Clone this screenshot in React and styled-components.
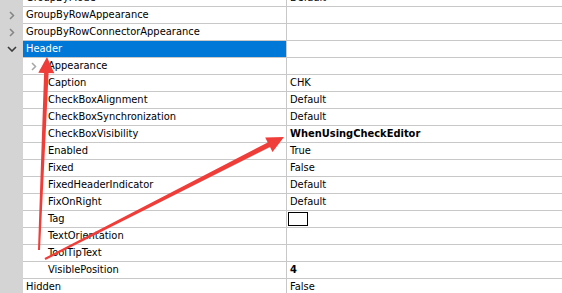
import React from "react";
import styled, { createGlobalStyle } from "styled-components";

const GlobalStyle = createGlobalStyle`
  html, body { margin: 0; padding: 0; background: #fff; }
  body {
    font-family: "DejaVu Sans Condensed", Tahoma, "Liberation Sans", sans-serif;
    font-size: 11px;
    color: #000;
    overflow: hidden;
  }
`;

const Grid = styled.div`
  position: relative;
  width: 562px;
  height: 293px;
  overflow: hidden;
  background: #fff;
`;

const List = styled.div`
  display: flex;
  flex-direction: column;
  margin-top: -10px;
`;

const Row = styled.div`
  display: grid;
  grid-template-columns: 23px 264px 1fr;
  height: 17px;
`;

const Gutter = styled.div`
  background: #d4d4d4;
  display: flex;
  align-items: center;
  justify-content: center;
  padding-bottom: 1px;
  box-sizing: border-box;
`;

const NameCell = styled.div`
  box-sizing: border-box;
  display: flex;
  align-items: center;
  border-bottom: 1px solid #c8c8c8;
  border-right: 1px solid #c8c8c8;
  background: ${(p) => (p.$selected ? "#0078d7" : "#fff")};
  color: ${(p) => (p.$selected ? "#fff" : "#000")};
  white-space: nowrap;
  overflow: hidden;
`;

const Indent = styled.span`
  width: 22px;
  flex: none;
  display: flex;
  align-items: center;
  justify-content: center;
  padding-left: 0px;
`;

const Label = styled.span`
  padding-left: 3px;
  line-height: 16px;
`;

const ValueCell = styled.div`
  box-sizing: border-box;
  display: flex;
  align-items: center;
  border-bottom: 1px solid #c8c8c8;
  padding-left: 3px;
  font-weight: ${(p) => (p.$bold ? "bold" : "normal")};
  white-space: nowrap;
  line-height: 16px;
`;

const ColorBox = styled.span`
  display: block;
  width: 20px;
  height: 14px;
  box-sizing: border-box;
  border: 1px solid #000;
  background: #fff;
  margin-left: -2px;
`;

const Overlay = styled.svg`
  position: absolute;
  left: 0;
  top: 0;
  pointer-events: none;
`;

const Chevron = ({ dir, color }) =>
  dir === "down" ? (
    <svg width="10" height="6" viewBox="0 0 10 6">
      <polyline points="1,1 5,5 9,1" fill="none" stroke={color} strokeWidth="1.6" />
    </svg>
  ) : (
    <svg width="6" height="9" viewBox="0 0 6 9">
      <polyline points="1,1 4.5,4.5 1,8" fill="none" stroke={color} strokeWidth="1.5" />
    </svg>
  );

const rows = [
  { name: "GroupByMode", value: "Default" },
  { name: "GroupByRowAppearance", gutter: "right" },
  { name: "GroupByRowConnectorAppearance", gutter: "right" },
  { name: "Header", gutter: "down", selected: true },
  { name: "Appearance", nested: true, expand: true },
  { name: "Caption", nested: true, value: "CHK" },
  { name: "CheckBoxAlignment", nested: true, value: "Default" },
  { name: "CheckBoxSynchronization", nested: true, value: "Default" },
  { name: "CheckBoxVisibility", nested: true, value: "WhenUsingCheckEditor", bold: true },
  { name: "Enabled", nested: true, value: "True" },
  { name: "Fixed", nested: true, value: "False" },
  { name: "FixedHeaderIndicator", nested: true, value: "Default" },
  { name: "FixOnRight", nested: true, value: "Default" },
  { name: "Tag", nested: true, box: true },
  { name: "TextOrientation", nested: true },
  { name: "ToolTipText", nested: true },
  { name: "VisiblePosition", nested: true, value: "4", bold: true },
  { name: "Hidden", value: "False" },
];

function arrowPoints(S, T, headLen, hw, w0, w1) {
  const dx = T[0] - S[0];
  const dy = T[1] - S[1];
  const len = Math.hypot(dx, dy);
  const u = [dx / len, dy / len];
  const p = [-u[1], u[0]];
  const B = [T[0] - headLen * u[0], T[1] - headLen * u[1]];
  const pt = (P, k) => `${(P[0] + p[0] * k).toFixed(1)},${(P[1] + p[1] * k).toFixed(1)}`;
  return [
    pt(S, w0 / 2),
    pt(B, w1 / 2),
    pt(B, hw),
    `${T[0]},${T[1]}`,
    pt(B, -hw),
    pt(B, -w1 / 2),
    pt(S, -w0 / 2),
  ].join(" ");
}

export default function App() {
  return (
    <>
      <GlobalStyle />
      <Grid>
        <List>
          {rows.map((r) => (
            <Row key={r.name}>
              <Gutter>
                {r.gutter && (
                  <Chevron dir={r.gutter} color={r.gutter === "down" ? "#3a3a3a" : "#858585"} />
                )}
              </Gutter>
              <NameCell $selected={r.selected}>
                {r.nested && <Indent>{r.expand && <Chevron dir="right" color="#a6a6a6" />}</Indent>}
                <Label>{r.name}</Label>
              </NameCell>
              <ValueCell $bold={r.bold}>
                {r.box ? <ColorBox /> : r.value}
              </ValueCell>
            </Row>
          ))}
        </List>
        <Overlay width="562" height="293" viewBox="0 0 562 293">
          <polygon fill="#ef3e3a" points={arrowPoints([39, 250], [47, 57], 16, 8, 2, 4.5)} />
          <polygon fill="#ef3e3a" points={arrowPoints([45, 259], [284, 137], 17, 8, 2, 5)} />
        </Overlay>
      </Grid>
    </>
  );
}
